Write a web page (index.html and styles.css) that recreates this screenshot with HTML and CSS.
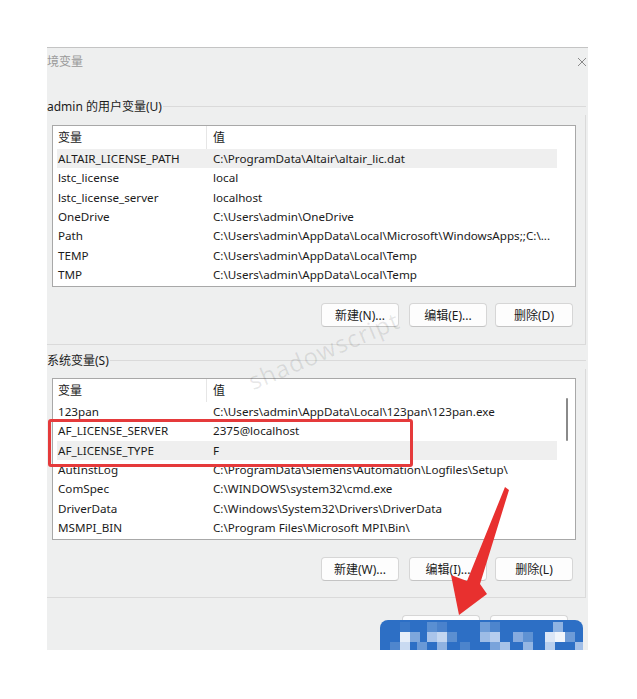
FILE: index.html
```html
<!DOCTYPE html>
<html lang="zh-CN">
<head>
<meta charset="utf-8">
<title>环境变量</title>
<link rel="stylesheet" href="styles.css">
</head>
<body>
<div class="dialog">
  <div class="titlebar">
    <span class="title">境变量</span>
    <svg class="close" width="10" height="10" viewBox="0 0 10 10"><path d="M1 1 L9 9 M9 1 L1 9" stroke="#8a8a8a" stroke-width="1" fill="none"/></svg>
  </div>

  <section class="group g-user">
    <div class="group-head"><span class="group-label">admin 的用户变量(U)</span><span class="rule"></span></div>
    <div class="group-body">
      <div class="list">
        <div class="row head"><span class="c1">变量</span><span class="c2">值</span></div>
        <div class="row sel"><span class="c1">ALTAIR_LICENSE_PATH</span><span class="c2">C:\ProgramData\Altair\altair_lic.dat</span></div>
        <div class="row"><span class="c1">lstc_license</span><span class="c2">local</span></div>
        <div class="row"><span class="c1">lstc_license_server</span><span class="c2">localhost</span></div>
        <div class="row"><span class="c1">OneDrive</span><span class="c2">C:\Users\admin\OneDrive</span></div>
        <div class="row"><span class="c1">Path</span><span class="c2">C:\Users\admin\AppData\Local\Microsoft\WindowsApps;;C:\...</span></div>
        <div class="row"><span class="c1">TEMP</span><span class="c2">C:\Users\admin\AppData\Local\Temp</span></div>
        <div class="row"><span class="c1">TMP</span><span class="c2">C:\Users\admin\AppData\Local\Temp</span></div>
      </div>
      <div class="btns">
        <button class="btn">新建(N)...</button>
        <button class="btn b2">编辑(E)...</button>
        <button class="btn b3">删除(D)</button>
      </div>
    </div>
  </section>

  <section class="group g-sys">
    <div class="group-head"><span class="group-label">系统变量(S)</span><span class="rule"></span></div>
    <div class="group-body">
      <div class="list">
        <div class="row head"><span class="c1">变量</span><span class="c2">值</span></div>
        <div class="row"><span class="c1">123pan</span><span class="c2">C:\Users\admin\AppData\Local\123pan\123pan.exe</span></div>
        <div class="row"><span class="c1">AF_LICENSE_SERVER</span><span class="c2">2375@localhost</span></div>
        <div class="row sel"><span class="c1">AF_LICENSE_TYPE</span><span class="c2">F</span></div>
        <div class="row"><span class="c1">AutInstLog</span><span class="c2">C:\ProgramData\Siemens\Automation\Logfiles\Setup\</span></div>
        <div class="row"><span class="c1">ComSpec</span><span class="c2">C:\WINDOWS\system32\cmd.exe</span></div>
        <div class="row"><span class="c1">DriverData</span><span class="c2">C:\Windows\System32\Drivers\DriverData</span></div>
        <div class="row"><span class="c1">MSMPI_BIN</span><span class="c2">C:\Program Files\Microsoft MPI\Bin\</span></div>
        <span class="scrollbar"></span>
      </div>
      <div class="btns">
        <button class="btn">新建(W)...</button>
        <button class="btn b2">编辑(I)...</button>
        <button class="btn b3">删除(L)</button>
      </div>
    </div>
  </section>

  <div class="footer">
    <button class="btn">确定</button>
    <button class="btn b2">取消</button>
  </div>

  <div class="watermark">shadowscript</div>
  <div class="redbox"></div>
  <svg class="mosaic" width="203" height="30" viewBox="0 0 203 30">
    <rect x="0" y="0" width="203" height="30" fill="#2d6fc5"/>
    <rect x="20" y="2" width="10" height="10" fill="#3a78c8"/>
    <rect x="47" y="2" width="10" height="10" fill="#5a8fd2"/>
    <rect x="57" y="2" width="10" height="10" fill="#4a82cc"/>
    <rect x="100" y="2" width="10" height="10" fill="#6f9dd8"/>
    <rect x="110" y="2" width="10" height="10" fill="#4d85cd"/>
    <rect x="173" y="2" width="10" height="10" fill="#8fb3e2"/>
    <rect x="20" y="12" width="10" height="10" fill="#e6eef9"/>
    <rect x="30" y="12" width="10" height="10" fill="#7ea7dc"/>
    <rect x="47" y="12" width="10" height="10" fill="#a9c4ea"/>
    <rect x="57" y="12" width="10" height="10" fill="#c3d6f0"/>
    <rect x="67" y="12" width="10" height="10" fill="#5b8fd1"/>
    <rect x="100" y="12" width="10" height="10" fill="#9dbce6"/>
    <rect x="110" y="12" width="10" height="10" fill="#b6cdee"/>
    <rect x="133" y="12" width="10" height="10" fill="#86abdf"/>
    <rect x="143" y="12" width="10" height="10" fill="#5f92d3"/>
    <rect x="165" y="12" width="10" height="10" fill="#dbe6f6"/>
    <rect x="175" y="12" width="10" height="10" fill="#f1f5fb"/>
    <rect x="185" y="12" width="10" height="10" fill="#6d9bd7"/>
    <rect x="10" y="22" width="10" height="8" fill="#4f86cd"/>
    <rect x="20" y="22" width="10" height="8" fill="#c9daf1"/>
    <rect x="37" y="22" width="10" height="8" fill="#6a99d6"/>
    <rect x="57" y="22" width="10" height="8" fill="#8fb2e1"/>
    <rect x="80" y="22" width="10" height="8" fill="#4c84cc"/>
    <rect x="110" y="22" width="10" height="8" fill="#79a3db"/>
    <rect x="120" y="22" width="10" height="8" fill="#a6c2e8"/>
    <rect x="143" y="22" width="10" height="8" fill="#94b6e3"/>
    <rect x="165" y="22" width="10" height="8" fill="#b8cfee"/>
    <rect x="195" y="22" width="8" height="8" fill="#a2bfe7"/>
  </svg>
</div>

<svg class="arrow" width="637" height="699" viewBox="0 0 637 699">
  <polygon points="505,487 509,490 480,584 487,594 459,615 451,575 467,581" fill="#e8302f"/>
</svg>
</body>
</html>
```

FILE: styles.css
```css
* { box-sizing: border-box; }

html, body {
  margin: 0;
  padding: 0;
  background: #ffffff;
}

body {
  font-family: "Noto Sans", "Noto Sans CJK SC", sans-serif;
  font-size: 12px;
  color: #1b1b1b;
  position: relative;
  width: 637px;
  height: 699px;
  overflow: hidden;
}

.dialog {
  position: relative;
  margin: 47px 0 0 47px;
  width: 541px;
  height: 603px;
  background: #eeefef;
  border-top: 1px solid #c4c4c4;
  overflow: hidden;
}

.titlebar {
  height: 27px;
  display: flex;
  align-items: center;
  justify-content: space-between;
  padding-right: 1px;
}

.title {
  color: #9a9a9a;
  font-size: 12px;
  line-height: 27px;
}

.close { display: block; }

.group {
  width: 539px;
}

.g-user { margin-top: 24px; }
.g-sys { margin-top: 8px; }

.group-head {
  height: 16px;
  display: flex;
  align-items: center;
}

.group-label {
  font-size: 12px;
  line-height: 16px;
  white-space: nowrap;
  padding-right: 1px;
}

.rule {
  flex: 1;
  height: 1px;
  background: #dadada;
  margin-top: -1px;
}

.group-body {
  border-right: 1px solid #dadada;
  border-bottom: 1px solid #dadada;
  padding: 10px 9px 17px 5px;
}

.g-sys .group-body {
  padding-top: 9px;
  padding-bottom: 16px;
}

.list {
  position: relative;
  height: 162px;
  background: #ffffff;
  border: 1px solid #a8a8a8;
  overflow: hidden;
  font-size: 11.65px;
}

.row {
  display: flex;
  margin-left: 4px;
  width: 500px;
  height: 19.33px;
  line-height: 19.33px;
  white-space: nowrap;
}

.row.head {
  height: 23px;
  line-height: 23px;
  font-size: 12px;
}

.row.head .c1 { border-right: 1px solid #e6e6e6; }

.row.sel { background: #efefef; }

.c1 {
  width: 150px;
  flex: none;
  padding-left: 1px;
  overflow: hidden;
}

.c2 {
  padding-left: 6px;
  flex: 1;
}

.scrollbar {
  position: absolute;
  left: 513px;
  top: 19px;
  width: 2px;
  height: 43px;
  border-radius: 1px;
  background: #8a8a8a;
}

.btns {
  display: flex;
  justify-content: flex-end;
  padding-right: 3px;
  margin-top: 16px;
}

.g-sys .btns { margin-top: 17px; }

.btn {
  width: 78px;
  height: 24px;
  padding: 0;
  font-family: "Noto Sans", "Noto Sans CJK SC", sans-serif;
  font-size: 12px;
  color: #1b1b1b;
  background: #fdfdfd;
  border: 1px solid #d6d6d6;
  border-bottom-color: #c4c4c4;
  border-radius: 4px;
}

.btn.b2 { margin-left: 10px; }
.btn.b3 { margin-left: 8px; }

.footer {
  display: flex;
  justify-content: flex-end;
  padding-right: 20px;
  margin-top: 17px;
}

.watermark {
  position: absolute;
  left: 196px;
  top: 288px;
  width: 160px;
  text-align: center;
  font-family: "Noto Sans", sans-serif;
  font-size: 24px;
  letter-spacing: 1px;
  line-height: 30px;
  color: rgba(0, 0, 0, 0.09);
  transform: rotate(-23deg);
  pointer-events: none;
}

.redbox {
  position: absolute;
  left: 1px;
  top: 371px;
  width: 365px;
  height: 48px;
  border: 3px solid #e53a3b;
  border-radius: 3px;
}

.mosaic {
  position: absolute;
  left: 333px;
  top: 572px;
  border-radius: 8px 8px 0 0;
}

.arrow {
  position: absolute;
  left: 0;
  top: 0;
  pointer-events: none;
}
```
